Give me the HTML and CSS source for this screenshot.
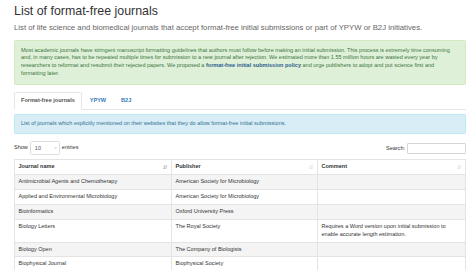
FILE: index.html
```html
<!DOCTYPE html>
<html lang="en">
<head>
  <meta charset="UTF-8" />
  <meta name="viewport" content="width=device-width, initial-scale=1.0"/>
  <title>List of format-free journals</title>
  <link rel="stylesheet" href="styles.css">
</head>
<body>

  <div class="container">
    <h1>List of format-free journals</h1>
    <p class="lead">List of life science and biomedical journals that accept format-free initial submissions or part of YPYW or B2J initiatives.</p>

    <div class="alert alert-success">
      Most academic journals have stringent manuscript formatting guidelines that authors must follow before making an initial submission. This process is extremely time consuming and, in many cases, has to be repeated multiple times for submission to a new journal after rejection. We estimated more than 1.55 million hours are wasted every year by researchers to reformat and resubmit their rejected papers. We proposed a <a href="#" class="alert-link">format-free initial submission policy</a> and urge publishers to adopt and put science first and formatting later.
    </div>

    <ul class="nav-tabs">
      <li class="active"><a href="#">Format-free journals</a></li>
      <li><a href="#">YPYW</a></li>
      <li><a href="#">B2J</a></li>
    </ul>

    <div class="alert alert-info">
      List of journals which explicitly mentioned on their websites that they do allow format-free initial submissions.
    </div>

    <div class="table-controls">
      <label class="length">
        Show
        <span class="select-wrap">
          <select>
            <option>10</option>
            <option>25</option>
            <option>50</option>
            <option>100</option>
          </select>
          <svg class="chevron" viewBox="0 0 10 6"><path d="M1 1l4 4 4-4" fill="none" stroke="#888" stroke-width="1.4"/></svg>
        </span>
        entries
      </label>
      <label class="search">Search: <input type="search"></label>
    </div>

    <table class="journals">
      <colgroup>
        <col class="col-name">
        <col class="col-publisher">
        <col>
      </colgroup>
      <thead>
        <tr>
          <th class="sorted">Journal name <svg class="sort" viewBox="0 0 10 10"><path d="M3 1v8M1 7l2 2 2-2M7 9V1M5 3l2-2 2 2" fill="none" stroke="#333" stroke-width="1.3"/></svg></th>
          <th>Publisher <svg class="sort" viewBox="0 0 10 10"><path d="M3 1v8M1 7l2 2 2-2M7 9V1M5 3l2-2 2 2" fill="none" stroke="#333" stroke-width="1.3"/></svg></th>
          <th>Comment <svg class="sort" viewBox="0 0 10 10"><path d="M3 1v8M1 7l2 2 2-2M7 9V1M5 3l2-2 2 2" fill="none" stroke="#333" stroke-width="1.3"/></svg></th>
        </tr>
      </thead>
      <tbody>
        <tr>
          <td>Antimicrobial Agents and Chemotherapy</td>
          <td>American Society for Microbiology</td>
          <td></td>
        </tr>
        <tr>
          <td>Applied and Environmental Microbiology</td>
          <td>American Society for Microbiology</td>
          <td></td>
        </tr>
        <tr>
          <td>Bioinformatics</td>
          <td>Oxford University Press</td>
          <td></td>
        </tr>
        <tr>
          <td>Biology Letters</td>
          <td>The Royal Society</td>
          <td>Requires a Word version upon initial submission to enable accurate length estimation.</td>
        </tr>
        <tr>
          <td>Biology Open</td>
          <td>The Company of Biologists</td>
          <td></td>
        </tr>
        <tr>
          <td>Biophysical Journal</td>
          <td>Biophysical Society</td>
          <td></td>
        </tr>
      </tbody>
    </table>
  </div>

</body>
</html>
```

FILE: styles.css
```css
body {
  margin: 0;
  background-color: #fff;
  color: #333;
  font-family: "Liberation Sans", Arial, sans-serif;
  font-size: 5.54px;
  line-height: 7.9px;
}

.container {
  width: 452px;
  padding-left: 14px;
}

h1 {
  margin: 5px 0 0;
  font-size: 12.4px;
  font-weight: 500;
  line-height: 13.6px;
  color: #333;
}

.lead {
  margin: 3.4px 0 0;
  font-size: 7.75px;
  font-weight: 300;
  line-height: 11.4px;
  color: #666;
}

.alert {
  border: 1px solid transparent;
  border-radius: 1.6px;
}

.alert-success {
  margin-top: 6.6px;
  padding: 5.6px 6px;
  background-color: #dff0d8;
  border-color: #d6e9c6;
  color: #3c763d;
}

.alert-link {
  font-weight: bold;
  color: #2a5d8c;
  text-decoration: none;
}

.alert-info {
  margin-top: 4px;
  padding: 5px 6px;
  background-color: #d9edf7;
  border-color: #bce8f1;
  color: #31708f;
}

.nav-tabs {
  display: flex;
  margin: 7.6px 0 0;
  padding: 0;
  list-style: none;
  border-bottom: 1px solid #e6e6e6;
}

.nav-tabs li {
  margin-right: 1px;
  margin-bottom: -1px;
}

.nav-tabs a {
  display: block;
  padding: 3.8px 6px;
  border: 1px solid transparent;
  border-radius: 1.6px 1.6px 0 0;
  font-weight: bold;
  color: #337ab7;
  text-decoration: none;
}

.nav-tabs .active a {
  background-color: #fff;
  border-color: #e6e6e6 #e6e6e6 transparent;
  color: #555;
}

.table-controls {
  display: flex;
  justify-content: space-between;
  align-items: center;
  margin-top: 7.5px;
}

.length,
.search {
  display: flex;
  align-items: center;
  gap: 2px;
}

.select-wrap {
  position: relative;
  display: block;
}

.select-wrap select {
  display: block;
  width: 30px;
  height: 13.5px;
  padding: 0 0 0 4px;
  border: 1px solid #ddd;
  border-radius: 1.5px;
  background-color: #fff;
  font-family: inherit;
  font-size: 5.54px;
  color: #555;
  appearance: none;
}

.chevron {
  position: absolute;
  right: 3px;
  top: 5.5px;
  width: 3.2px;
  height: 2px;
}

.search {
  margin-top: 1px;
}

.search input {
  width: 59px;
  height: 11px;
  box-sizing: border-box;
  margin: 0;
  padding: 0 2px;
  border: 1px solid #d6d6d6;
  border-radius: 1px;
  font-size: 5.54px;
}

.journals {
  width: 452px;
  margin-top: 4.3px;
  border-collapse: collapse;
  table-layout: fixed;
}

.col-name {
  width: 157px;
}

.col-publisher {
  width: 146px;
}

.journals th,
.journals td {
  padding: 3px 3.5px;
  border: 1px solid #e4e4e4;
  text-align: left;
  vertical-align: top;
}

.journals th {
  font-weight: bold;
  color: #333;
}

.sort {
  float: right;
  width: 4.4px;
  height: 4.4px;
  margin-top: 1.8px;
  opacity: 0.2;
}

.sorted .sort {
  opacity: 0.5;
}

.journals tbody tr:nth-child(odd) {
  background-color: #f4f4f4;
}
```
